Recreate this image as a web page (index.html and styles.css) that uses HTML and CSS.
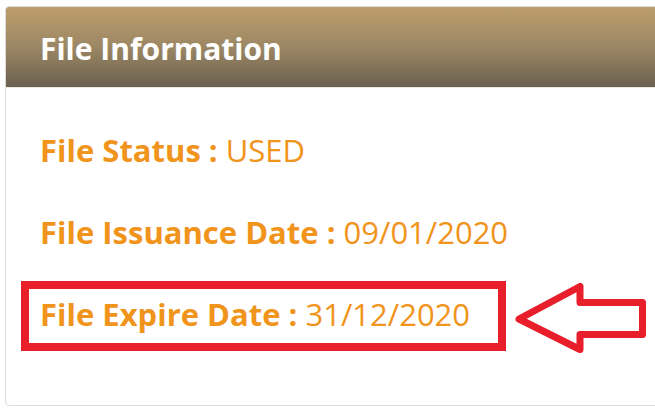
FILE: index.html
```html
<!DOCTYPE html>
<html lang="en">
<head>
    <meta charset="UTF-8">
    <meta name="viewport" content="width=device-width, initial-scale=1.0">
    <title>File Information</title>
    <link rel="stylesheet" href="styles.css">
</head>
<body>

<div class="panel">
    <div class="panel-heading">File Information</div>

    <div class="panel-body">
        <div class="row">
            <span class="label">File Status :</span> <span class="value">USED</span>
        </div>
        <div class="row">
            <span class="label">File Issuance Date :</span> <span class="value">09/01/2020</span>
        </div>
        <div class="row-marked">
            <div class="row highlight">
                <span class="label">File Expire Date :</span> <span class="value">31/12/2020</span>
            </div>
            <svg class="arrow" width="140" height="78" viewBox="0 0 140 78">
                <polygon points="9,41 70,8.5 70,24.5 132.5,24.5 132.5,56.5 70,56.5 70,71.5"
                         fill="none" stroke="#e81e2a" stroke-width="7" stroke-linejoin="round"/>
            </svg>
        </div>
    </div>
</div>

</body>
</html>
```

FILE: styles.css
```css
html, body {
    overflow: hidden;
}
body {
    font-family: "Open Sans", Arial, sans-serif;
    margin: 0;
    padding: 6px 0 0 5px;
    background: #fff;
}
.panel {
    width: 670px;
    height: 400px;
    border: 1px solid #dcdcdc;
    border-radius: 4px;
    box-sizing: border-box;
    overflow: hidden;
}
.panel-heading {
    height: 78px;
    padding-top: 2px;
    line-height: 80px;
    padding-left: 34px;
    color: #fff;
    font-weight: bold;
    font-size: 30px;
    background: linear-gradient(to bottom, #bc9d6c 0%, #9c8764 50%, #6a604f 100%);
    border-bottom: 1px solid #ece9e4;
}
.panel-body {
    padding: 29px 0 0 15px;
}
.row {
    height: 54px;
    line-height: 50px;
    padding-left: 11px;
    border: 8px solid transparent;
    margin-bottom: 12px;
    font-size: 31px;
    color: #f0941c;
    white-space: nowrap;
}
.label {
    font-weight: bold;
}
.value {
    font-weight: normal;
}
.row-marked {
    display: flex;
    align-items: flex-start;
}
.highlight {
    border-color: #e81e2a;
    margin-bottom: 0;
    padding-right: 28px;
}
.arrow {
    margin: -3px 0 0 4px;
}
```
